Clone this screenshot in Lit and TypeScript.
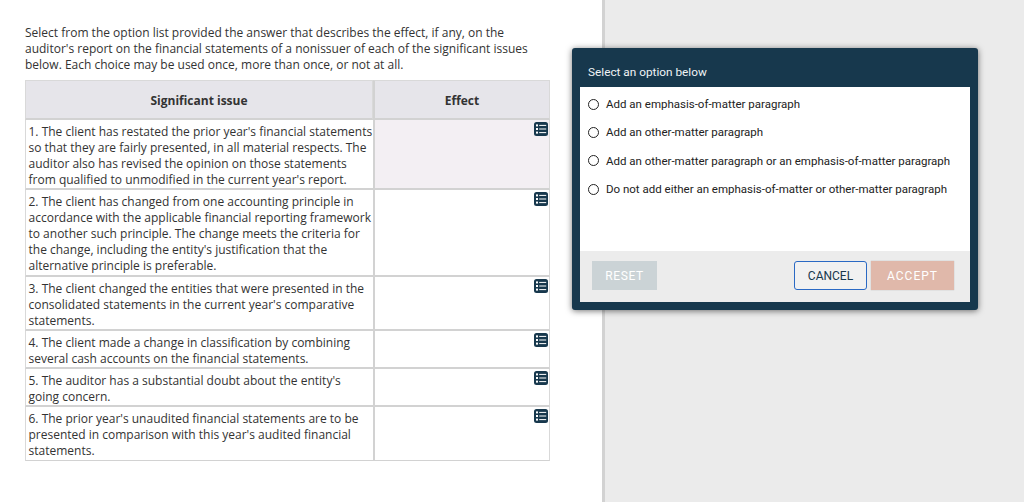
import { LitElement, html, css } from 'lit';
import { customElement } from 'lit/decorators.js';

const ISSUES = [
  { h: 68, text: "1. The client has restated the prior year's financial statements so that they are fairly presented, in all material respects. The auditor also has revised the opinion on those statements from qualified to unmodified in the current year's report." },
  { h: 85, text: "2. The client has changed from one accounting principle in accordance with the applicable financial reporting framework to another such principle. The change meets the criteria for the change, including the entity's justification that the alternative principle is preferable." },
  { h: 52, text: "3. The client changed the entities that were presented in the consolidated statements in the current year's comparative statements." },
  { h: 36, text: "4. The client made a change in classification by combining several cash accounts on the financial statements." },
  { h: 36, text: "5. The auditor has a substantial doubt about the entity's going concern." },
  { h: 52, text: "6. The prior year's unaudited financial statements are to be presented in comparison with this year's audited financial statements." },
];

const OPTIONS = [
  'Add an emphasis-of-matter paragraph',
  'Add an other-matter paragraph',
  'Add an other-matter paragraph or an emphasis-of-matter paragraph',
  'Do not add either an emphasis-of-matter or other-matter paragraph',
];

const listIcon = html`
  <svg class="icon" viewBox="0 0 14 14" width="14" height="14" aria-hidden="true">
    <rect width="14" height="14" rx="2.5" fill="#17384d"></rect>
    <g fill="#fff">
      <rect x="2" y="2.4" width="2" height="2"></rect>
      <rect x="2" y="6" width="2" height="2"></rect>
      <rect x="2" y="9.6" width="2" height="2"></rect>
      <rect x="5.2" y="2.9" width="7" height="1"></rect>
      <rect x="5.2" y="6.5" width="7" height="1"></rect>
      <rect x="5.2" y="10.1" width="7" height="1"></rect>
    </g>
  </svg>
`;

@customElement('app-root')
export class AppRoot extends LitElement {
  static styles = css`
    :host {
      display: block;
      position: relative;
      width: 1024px;
      height: 502px;
      overflow: hidden;
      background: #ebebeb;
    }
    .page {
      display: flex;
      height: 100%;
    }
    .left {
      box-sizing: border-box;
      width: 602px;
      height: 100%;
      padding: 25px 52px 0 25px;
      background: #fff;
      font-family: 'Open Sans', sans-serif;
      font-size: 12px;
      line-height: 16px;
      color: #333;
    }
    .divider {
      width: 3px;
      background: #d2d2d2;
    }
    .intro {
      margin: 0 0 7px;
      height: 48px;
    }
    .table {
      display: grid;
      grid-template-columns: 348px 177px;
      width: 525px;
    }
    .head {
      box-sizing: border-box;
      height: 40px;
      padding-top: 12px;
      text-align: center;
      font-weight: 700;
      background: #e6e5ea;
      border: 1px solid #d9d9d9;
      border-bottom: 2px solid #d2d2d2;
    }
    .head.second {
      border-left: 2px solid #d2d2d2;
    }
    .issue {
      box-sizing: border-box;
      padding: 4px 0 0 2.5px;
      border-left: 1px solid #d9d9d9;
      border-bottom: 2px solid #d2d2d2;
    }
    .effect {
      box-sizing: border-box;
      display: flex;
      justify-content: flex-end;
      align-items: flex-start;
      padding: 2px 1px 0 0;
      border-left: 2px solid #d2d2d2;
      border-right: 1px solid #d9d9d9;
      border-bottom: 2px solid #d2d2d2;
    }
    .effect.active {
      background: #f3eff3;
    }
    .issue.last,
    .effect.last {
      border-bottom-width: 1px;
    }
    .icon {
      display: block;
    }
    .modal {
      position: absolute;
      left: 572px;
      top: 48px;
      box-sizing: border-box;
      width: 406px;
      height: 262px;
      padding: 0 8px 8px;
      background: #17384d;
      border-radius: 3px;
      box-shadow: 0 1px 6px rgba(0, 0, 0, 0.55);
      display: flex;
      flex-direction: column;
      font-family: Roboto, sans-serif;
    }
    .modal-title {
      height: 39px;
      box-sizing: border-box;
      padding: 17px 0 0 8px;
      font-size: 11.8px;
      line-height: 15px;
      color: #f0f3f5;
    }
    .options {
      flex: 1;
      background: #fff;
      padding: 3px 0 0 8px;
      font-size: 11.5px;
      color: #222;
    }
    .option {
      display: flex;
      align-items: center;
      gap: 7px;
      height: 28.3px;
    }
    .radio {
      box-sizing: border-box;
      width: 11px;
      height: 11px;
      border: 1px solid #222;
      border-radius: 50%;
      background: #fff;
    }
    .footer {
      display: flex;
      align-items: center;
      gap: 4px;
      box-sizing: border-box;
      height: 51px;
      padding: 0 16px 2px 12px;
      background: #ececec;
    }
    .btn {
      box-sizing: border-box;
      height: 29px;
      display: flex;
      align-items: center;
      justify-content: center;
      font-family: Roboto, sans-serif;
      font-size: 12px;
      letter-spacing: 0.6px;
      color: #fff;
    }
    .reset {
      width: 65px;
      background: #cbd3d6;
      margin-right: auto;
    }
    .cancel {
      width: 73px;
      color: #17384d;
      background: #f1f1f1;
      border: 1.5px solid #2a69c4;
      border-radius: 3px;
      letter-spacing: 0;
    }
    .accept {
      width: 83px;
      background: #e0b8aa;
      box-shadow: 0 0 1px rgba(0, 0, 0, 0.25);
      letter-spacing: 1px;
    }
  `;

  render() {
    return html`
      <div class="page">
        <div class="left">
          <p class="intro">
            Select from the option list provided the answer that describes the effect, if any, on the
            auditor's report on the financial statements of a nonissuer of each of the significant issues
            below. Each choice may be used once, more than once, or not at all.
          </p>
          <div class="table">
            <div class="head">Significant issue</div>
            <div class="head second">Effect</div>
            ${ISSUES.map((row, i) => {
              const last = i === ISSUES.length - 1 ? ' last' : '';
              return html`
                <div class="issue${last}" style="height: ${row.h + 2}px">${row.text}</div>
                <div class="effect${last}${i === 0 ? ' active' : ''}" style="height: ${row.h + 2}px">${listIcon}</div>
              `;
            })}
          </div>
        </div>
        <div class="divider"></div>
      </div>
      <div class="modal">
        <div class="modal-title">Select an option below</div>
        <div class="options">
          ${OPTIONS.map((o) => html`<div class="option"><span class="radio"></span><span>${o}</span></div>`)}
        </div>
        <div class="footer">
          <div class="btn reset">RESET</div>
          <div class="btn cancel">CANCEL</div>
          <div class="btn accept">ACCEPT</div>
        </div>
      </div>
    `;
  }
}
